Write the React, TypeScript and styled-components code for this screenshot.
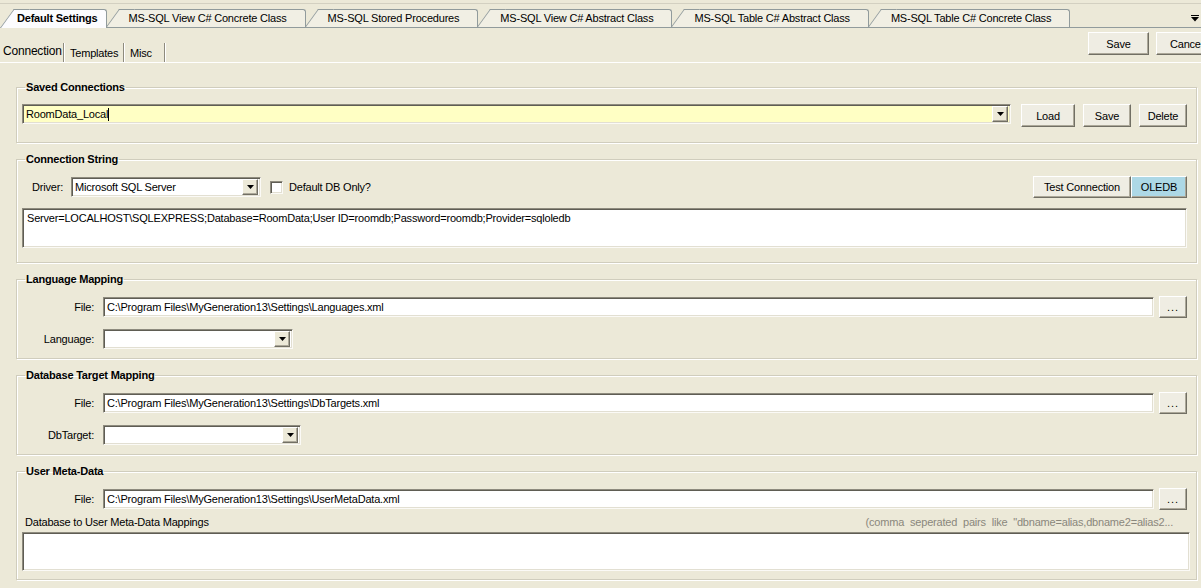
import React from "react";
import styled, { createGlobalStyle, css } from "styled-components";

const GlobalStyle = createGlobalStyle`
  * {
    box-sizing: border-box;
  }
  html, body {
    margin: 0;
    padding: 0;
    background: #ece9d8;
    overflow: hidden;
  }
  body {
    font-family: "Liberation Sans", Arial, sans-serif;
    font-size: 11px;
    letter-spacing: -0.2px;
    color: #000;
  }
`;

const sunken = css`
  background: #fff;
  border: 1px solid;
  border-color: #8e8b7e #fbfaf6 #fbfaf6 #8e8b7e;
  box-shadow: inset 1px 1px 0 #5f5d54, inset -1px -1px 0 #e2dfd2;
`;

const raised = css`
  background: #efede3;
  border: 1px solid;
  border-color: #fff #716f64 #716f64 #fff;
  box-shadow: inset -1px -1px 0 #aca899;
`;

const Window = styled.div`
  width: 1201px;
  height: 588px;
  overflow: hidden;
  background: #ece9d8;
`;

/* ---------- document tabs ---------- */

const DocTabStrip = styled.div`
  display: flex;
  align-items: flex-end;
  height: 25px;
  margin-top: 3px;
  padding-top: 5px;
  border-top: 1px solid #d3d0c1;
  border-bottom: 1px solid #919b9c;
`;

const DocTab = styled.div<{ $active?: boolean; $z: number }>`
  position: relative;
  z-index: ${(p) => (p.$active ? 50 : p.$z)};
  height: ${(p) => (p.$active ? 19 : 18)}px;
  margin-bottom: ${(p) => (p.$active ? -1 : 0)}px;
  margin-left: ${(p) => (p.$active ? 14 : 13)}px;
  padding: ${(p) => (p.$active ? "0 8px 0 3px" : "0 18px 0 9px")};
  line-height: 16px;
  white-space: nowrap;
  background: ${(p) => (p.$active ? "#fcfcfe" : "#f1efe4")};
  border-top: 1px solid #919b9c;
  border-right: 1px solid #919b9c;
  border-top-right-radius: 3px;
  font-weight: ${(p) => (p.$active ? 700 : 400)};

  &::before {
    content: "";
    position: absolute;
    z-index: -1;
    left: -14px;
    top: -1px;
    bottom: 0;
    width: 15px;
    background: inherit;
    border-left: 1px solid #919b9c;
    border-top: 1px solid #919b9c;
    transform: skewX(-36deg);
    transform-origin: bottom left;
  }
`;

const MoreTabs = styled.div`
  margin-left: auto;
  margin-right: 2px;
  align-self: center;
  display: flex;
`;

/* ---------- page tabs + save/cancel ---------- */

const ToolRow = styled.div`
  display: flex;
  justify-content: space-between;
  height: 35px;
  border-bottom: 1px solid #fff;
`;

const SubTabs = styled.div`
  display: flex;
  align-items: flex-end;
`;

const SubTab = styled.div<{ $w: number; $active?: boolean }>`
  width: ${(p) => p.$w}px;
  height: 19px;
  padding-left: ${(p) => (p.$active ? 3 : 6)}px;
  padding-bottom: ${(p) => (p.$active ? 3 : 0)}px;
  display: flex;
  align-items: center;
  font-size: ${(p) => (p.$active ? 12 : 11)}px;
  border-right: 1px solid #8e8b7e;
  box-shadow: 1px 0 0 #fff;
`;

const DialogButtons = styled.div`
  display: flex;
  gap: 7px;
  padding-top: 4px;
  margin-right: -16px;
`;

const Button = styled.button<{ $w: number; $h?: number; $blue?: boolean }>`
  ${raised};
  width: ${(p) => p.$w}px;
  height: ${(p) => p.$h ?? 23}px;
  padding: 0;
  font-family: inherit;
  font-size: 11px;
  letter-spacing: inherit;
  color: #000;
  background: ${(p) => (p.$blue ? "#add8e6" : "#efede3")};
  flex: none;
`;

/* ---------- group boxes ---------- */

const Content = styled.div`
  padding-top: 18px;
  display: flex;
  flex-direction: column;
  gap: 10px;
`;

const Group = styled.fieldset<{ $pb: number }>`
  margin: 0 4px 0 16px;
  padding: 10px 9px ${(p) => p.$pb}px 5px;
  border: 1px solid #d0cdbd;
  box-shadow: inset 1px 1px 0 #fff, 1px 1px 0 #fff;
  min-width: 0;
`;

const Legend = styled.legend`
  margin-left: 3px;
  padding: 0 1px;
  font-weight: 700;
  font-size: 11px;
  line-height: 13px;
`;

const Row = styled.div<{ $mt?: number; $top?: boolean }>`
  display: flex;
  align-items: ${(p) => (p.$top ? "flex-start" : "center")};
  height: ${(p) => (p.$top ? 23 : 22)}px;
  margin-top: ${(p) => p.$mt ?? 0}px;
`;

const ComboBox = styled.div<{ $w?: number; $yellow?: boolean }>`
  ${sunken};
  display: flex;
  align-items: center;
  height: 20px;
  width: ${(p) => (p.$w ? `${p.$w}px` : "auto")};
  flex: ${(p) => (p.$w ? "none" : "1")};
  background: ${(p) => (p.$yellow ? "#ffffc4" : "#fff")};
  padding: 0 2px 0 3px;
`;

const ComboText = styled.span`
  flex: 1;
  white-space: nowrap;
  overflow: hidden;
  display: flex;
  align-items: center;
`;

const Caret = styled.span`
  display: inline-block;
  width: 1px;
  height: 13px;
  background: #000;
`;

const DropButton = styled.div`
  ${raised};
  width: 16px;
  height: 16px;
  display: flex;
  align-items: center;
  justify-content: center;
  background: #ece9d8;
`;

const ButtonSet = styled.div`
  display: flex;
  gap: 8px;
  margin-left: 10px;
`;

const InlineLabel = styled.span<{ $ml?: number }>`
  margin-left: ${(p) => p.$ml ?? 0}px;
  margin-right: 8px;
  white-space: nowrap;
`;

const CheckBox = styled.span`
  ${sunken};
  width: 13px;
  height: 13px;
  margin-left: 9px;
  margin-right: 6px;
`;

const Spacer = styled.div`
  flex: 1;
`;

const TextArea = styled.div<{ $mt: number; $h: number; $mr?: number }>`
  ${sunken};
  margin-top: ${(p) => p.$mt}px;
  margin-right: ${(p) => p.$mr ?? 0}px;
  height: ${(p) => p.$h}px;
  padding: 3px 4px;
  white-space: nowrap;
  overflow: hidden;
`;

const FieldLabel = styled.span`
  width: 72px;
  margin-right: 9px;
  text-align: right;
  flex: none;
`;

const TextBox = styled.div`
  ${sunken};
  flex: 1;
  height: 20px;
  padding: 0 3px;
  display: flex;
  align-items: center;
  white-space: nowrap;
  overflow: hidden;
`;

const BrowseButton = styled(Button)`
  margin-left: 5px;
  letter-spacing: 1px;
`;

const MappingHead = styled.div`
  display: flex;
  justify-content: space-between;
  margin-top: 5px;
  height: 14px;
  line-height: 14px;
  padding: 0 14px 0 3px;
`;

const Hint = styled.span`
  color: #8a877c;
  word-spacing: 3px;
`;

function DropArrow() {
  return (
    <svg width="7" height="4" viewBox="0 0 7 4">
      <polygon points="0,0 7,0 3.5,4" fill="#000" />
    </svg>
  );
}

function Combo({ w, yellow, children }: { w?: number; yellow?: boolean; children?: React.ReactNode }) {
  return (
    <ComboBox $w={w} $yellow={yellow}>
      <ComboText>{children}</ComboText>
      <DropButton>
        <DropArrow />
      </DropButton>
    </ComboBox>
  );
}

const docTabs = [
  "MS-SQL View C# Concrete Class",
  "MS-SQL Stored Procedures",
  "MS-SQL View C# Abstract Class",
  "MS-SQL Table C# Abstract Class",
  "MS-SQL Table C# Concrete Class",
];

export default function App() {
  return (
    <Window>
      <GlobalStyle />
      <DocTabStrip>
        <DocTab $active $z={20}>Default Settings</DocTab>
        {docTabs.map((t, i) => (
          <DocTab key={t} $z={19 - i}>
            {t}
          </DocTab>
        ))}
        <MoreTabs>
          <svg width="8" height="7" viewBox="0 0 8 7">
            <rect x="0" y="0" width="8" height="1" fill="#000" />
            <polygon points="0,2 8,2 4,6.5" fill="#000" />
          </svg>
        </MoreTabs>
      </DocTabStrip>

      <ToolRow>
        <SubTabs>
          <SubTab $w={64} $active>Connection</SubTab>
          <SubTab $w={60}>Templates</SubTab>
          <SubTab $w={41}>Misc</SubTab>
        </SubTabs>
        <DialogButtons>
          <Button $w={61}>Save</Button>
          <Button $w={61}>Cancel</Button>
        </DialogButtons>
      </ToolRow>

      <Content>
        <Group $pb={15}>
          <Legend>Saved Connections</Legend>
          <Row $top>
            <Combo yellow>
              RoomData_Local
              <Caret />
            </Combo>
            <ButtonSet>
              <Button $w={54}>Load</Button>
              <Button $w={48}>Save</Button>
              <Button $w={48}>Delete</Button>
            </ButtonSet>
          </Row>
        </Group>

        <Group $pb={14}>
          <Legend>Connection String</Legend>
          <Row>
            <InlineLabel $ml={10}>Driver:</InlineLabel>
            <Combo w={190}>Microsoft SQL Server</Combo>
            <CheckBox />
            <span>Default DB Only?</span>
            <Spacer />
            <Button $w={98} $h={22}>Test Connection</Button>
            <Button $w={56} $h={22} $blue>
              OLEDB
            </Button>
          </Row>
          <TextArea $mt={10} $h={40}>
            Server=LOCALHOST\SQLEXPRESS;Database=RoomData;User ID=roomdb;Password=roomdb;Provider=sqloledb
          </TextArea>
        </Group>

        <Group $pb={8}>
          <Legend>Language Mapping</Legend>
          <Row>
            <FieldLabel>File:</FieldLabel>
            <TextBox>C:\Program Files\MyGeneration13\Settings\Languages.xml</TextBox>
            <BrowseButton $w={28} $h={22}>...</BrowseButton>
          </Row>
          <Row $mt={10}>
            <FieldLabel>Language:</FieldLabel>
            <Combo w={190} />
          </Row>
        </Group>

        <Group $pb={8}>
          <Legend>Database Target Mapping</Legend>
          <Row>
            <FieldLabel>File:</FieldLabel>
            <TextBox>C:\Program Files\MyGeneration13\Settings\DbTargets.xml</TextBox>
            <BrowseButton $w={28} $h={22}>...</BrowseButton>
          </Row>
          <Row $mt={10}>
            <FieldLabel>DbTarget:</FieldLabel>
            <Combo w={198} />
          </Row>
        </Group>

        <Group $pb={8}>
          <Legend>User Meta-Data</Legend>
          <Row>
            <FieldLabel>File:</FieldLabel>
            <TextBox>C:\Program Files\MyGeneration13\Settings\UserMetaData.xml</TextBox>
            <BrowseButton $w={28} $h={22}>...</BrowseButton>
          </Row>
          <MappingHead>
            <span>Database to User Meta-Data Mappings</span>
            <Hint>(comma seperated pairs like "dbname=alias,dbname2=alias2...</Hint>
          </MappingHead>
          <TextArea $mt={3} $h={39} $mr={-3} />
        </Group>
      </Content>
    </Window>
  );
}
